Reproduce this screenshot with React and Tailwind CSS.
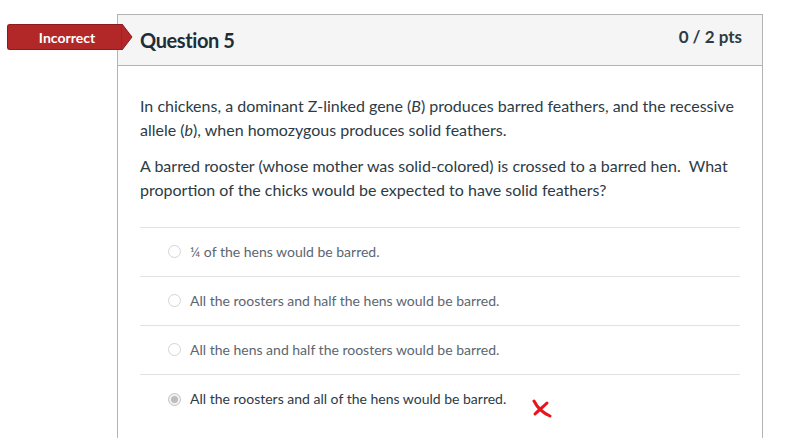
import React from "react";

const answers = [
  { text: "¼ of the hens would be barred.", selected: false },
  { text: "All the roosters and half the hens would be barred.", selected: false },
  { text: "All the hens and half the roosters would be barred.", selected: false },
  { text: "All the roosters and all of the hens would be barred.", selected: true },
];

export default function App() {
  return (
    <div className="relative w-[785px] h-[438px] overflow-hidden bg-white" style={{ fontFamily: "Lato, 'Open Sans', sans-serif" }}>
      <div className="pt-[14px] pl-[117px]">
        <div className="w-[646px] h-[440px] border border-[#b3b3b3] bg-white">
          <div className="h-[51px] bg-[#f5f5f5] border-b border-[#b3b3b3] flex items-start justify-between pl-[22px] pr-[20px]">
            <div className="text-[20px] font-bold text-[#1f2d38] mt-[10px] tracking-[-0.4px]">Question 5</div>
            <div className="text-[17px] font-bold text-[#2d3b45] mt-[9px]">0 / 2 pts</div>
          </div>
          <div className="px-[22px] pt-[28px] text-[16px] leading-[24px] text-[#2d3b45]">
            <p>
              In chickens, a dominant Z-linked gene (<i>B</i>) produces barred feathers, and the recessive allele (<i>b</i>), when homozygous produces solid feathers.
            </p>
            <p className="mt-[12px]">
              A barred rooster (whose mother was solid-colored) is crossed to a barred hen.&nbsp; What proportion of the chicks would be expected to have solid feathers?
            </p>
            <div className="mt-[25px] border-t border-[#e2e2e2]">
              {answers.map((a, i) => (
                <div key={i} className={`h-[49px] flex items-center pl-[28px] pb-[1px] ${i < answers.length - 1 ? "border-b border-[#e2e2e2]" : ""}`}>
                  {a.selected ? (
                    <span className="w-[13px] h-[13px] rounded-full border border-[#c4c4c4] bg-[#f0f0f0] flex items-center justify-center">
                      <span className="w-[7px] h-[7px] rounded-full bg-[#bdbdbd]" />
                    </span>
                  ) : (
                    <span className="w-[13px] h-[13px] rounded-full border border-[#d4d4d4] bg-white" />
                  )}
                  <span className={`ml-[9px] text-[14px] ${a.selected ? "text-[#2d3b45]" : "text-[#5b6670]"}`}>{a.text}</span>
                  {a.selected && (
                    <svg className="ml-[25px] mt-[20px]" width="22" height="20" viewBox="0 0 22 20">
                      <path d="M3 2 C6 8, 10 13, 19 17" stroke="#e8141c" strokeWidth="3" fill="none" strokeLinecap="round" />
                      <path d="M16 4 C12 8, 8 11, 4 15" stroke="#e8141c" strokeWidth="3" fill="none" strokeLinecap="round" />
                    </svg>
                  )}
                </div>
              ))}
            </div>
          </div>
        </div>
      </div>
      <div className="absolute left-[7px] top-[24px] h-[26px] flex items-stretch">
        <div className="w-[115px] pl-[4px] bg-[#b22828] border border-r-0 border-[#8e1c1c] rounded-l-[3px] flex items-center justify-center text-white text-[14px] font-bold">
          Incorrect
        </div>
        <svg width="12" height="26" viewBox="0 0 12 26" className="-ml-[1px]">
          <polygon points="0,0 1,0 11,13 1,26 0,26" fill="#b22828" stroke="#8e1c1c" strokeWidth="1" />
        </svg>
      </div>
    </div>
  );
}
